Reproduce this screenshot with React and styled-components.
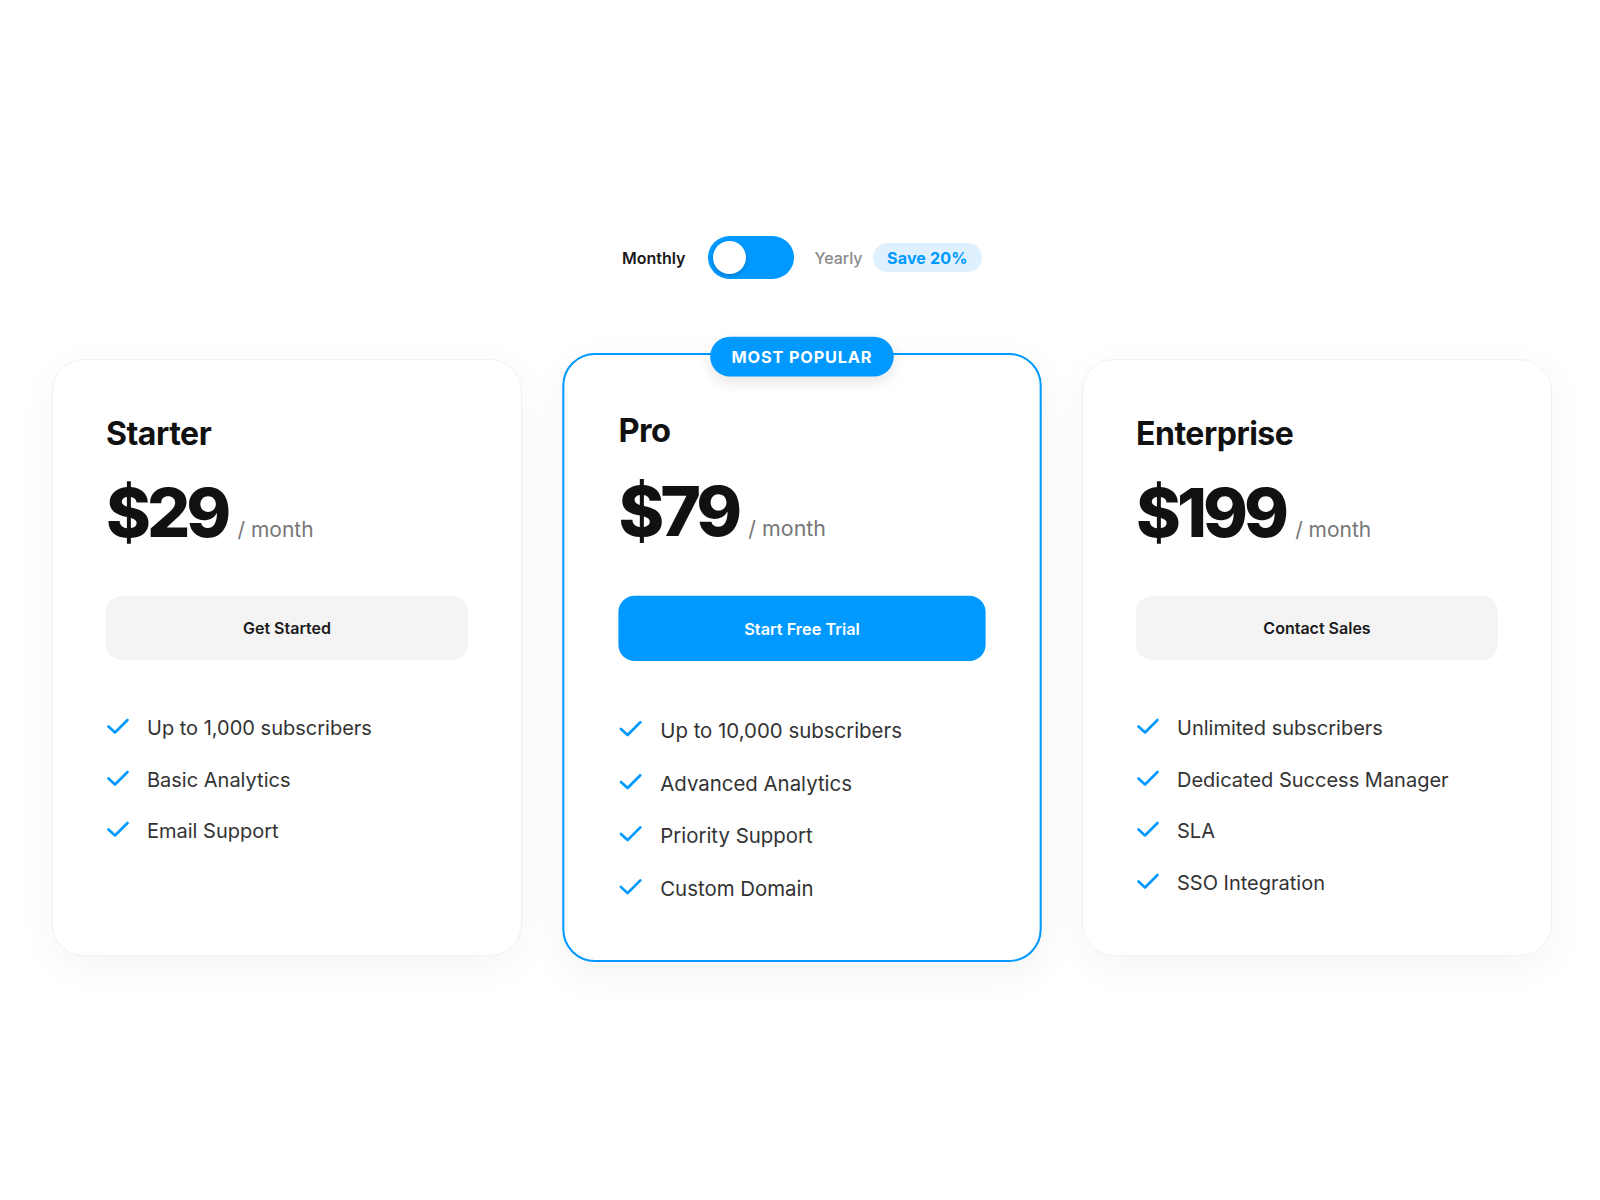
import React from 'react';
import styled, { createGlobalStyle } from 'styled-components';

const GlobalStyle = createGlobalStyle`
  body {
    margin: 0;
    background: #ffffff;
    font-family: Inter, "Noto Sans", sans-serif;
    color: #111111;
  }
`;

const plans = [
  {
    name: 'Starter',
    price: '$29',
    cta: 'Get Started',
    features: ['Up to 1,000 subscribers', 'Basic Analytics', 'Email Support'],
  },
  {
    name: 'Pro',
    price: '$79',
    cta: 'Start Free Trial',
    featured: true,
    features: [
      'Up to 10,000 subscribers',
      'Advanced Analytics',
      'Priority Support',
      'Custom Domain',
    ],
  },
  {
    name: 'Enterprise',
    price: '$199',
    cta: 'Contact Sales',
    features: [
      'Unlimited subscribers',
      'Dedicated Success Manager',
      'SLA',
      'SSO Integration',
    ],
  },
];

const CheckIcon = () => (
  <svg width="24" height="18" viewBox="0 0 24 18" fill="none">
    <path
      d="M2.5 9.5 L9 15.5 L21.5 3"
      stroke="#0099ff"
      strokeWidth="2.6"
      strokeLinecap="round"
      strokeLinejoin="round"
    />
  </svg>
);

const App = () => {
  return (
    <Page>
      <GlobalStyle />
      <BillingRow>
        <PeriodLabel active>Monthly</PeriodLabel>
        <Switch>
          <Knob />
        </Switch>
        <YearlyGroup>
          <PeriodLabel>Yearly</PeriodLabel>
          <SaveBadge>Save 20%</SaveBadge>
        </YearlyGroup>
      </BillingRow>

      <Cards>
        {plans.map((plan) => (
          <Card key={plan.name} featured={plan.featured}>
            {plan.featured && <PopularBadge>MOST POPULAR</PopularBadge>}
            <PlanName>{plan.name}</PlanName>
            <PriceRow>
              <Price>{plan.price}</Price>
              <Period>/ month</Period>
            </PriceRow>
            <CtaButton primary={plan.featured}>{plan.cta}</CtaButton>
            <FeatureList>
              {plan.features.map((f) => (
                <Feature key={f}>
                  <CheckIcon />
                  <span>{f}</span>
                </Feature>
              ))}
            </FeatureList>
          </Card>
        ))}
      </Cards>
    </Page>
  );
};

export default App;

const Page = styled.div`
  display: flex;
  flex-direction: column;
  align-items: center;
  box-sizing: border-box;
  min-height: 100vh;
  padding: 236px 0 80px 4px;
`;

const BillingRow = styled.div`
  display: flex;
  align-items: center;
  gap: 20px;
  height: 43px;
`;

const PeriodLabel = styled.span`
  font-size: 16px;
  font-weight: ${(p) => (p.active ? 600 : 500)};
  color: ${(p) => (p.active ? '#1a1a1a' : '#8a8a8a')};
  margin-right: ${(p) => (p.active ? '3px' : '0')};
`;

const Switch = styled.div`
  display: flex;
  align-items: center;
  box-sizing: border-box;
  width: 86px;
  height: 43px;
  padding: 0 5px;
  border-radius: 22px;
  background: #0099ff;
`;

const Knob = styled.div`
  width: 33px;
  height: 33px;
  border-radius: 50%;
  background: #ffffff;
  box-shadow: 0 2px 4px rgba(0, 0, 0, 0.18);
`;

const YearlyGroup = styled.div`
  display: flex;
  align-items: center;
  gap: 10px;
`;

const SaveBadge = styled.span`
  display: flex;
  align-items: center;
  height: 29px;
  padding: 0 14.5px;
  border-radius: 15px;
  background: #dff1ff;
  color: #0099ff;
  font-size: 16px;
  font-weight: 700;
  letter-spacing: 0.01em;
`;

const Cards = styled.div`
  display: grid;
  grid-template-columns: repeat(3, 470px);
  gap: 45px;
  margin-top: 80px;
`;

const Card = styled.div`
  position: relative;
  display: flex;
  flex-direction: column;
  box-sizing: border-box;
  padding: 55px 53px 55px;
  border: ${(p) => (p.featured ? '2px solid #0099ff' : '1px solid #f1f1f1')};
  border-radius: 32px;
  background: #ffffff;
  box-shadow: ${(p) =>
    p.featured
      ? '0 12px 40px rgba(0, 0, 0, 0.05)'
      : '0 10px 40px rgba(0, 0, 0, 0.045)'};
  transform: ${(p) => (p.featured ? 'scale(1.02)' : 'none')};
`;

const PopularBadge = styled.div`
  position: absolute;
  top: -18px;
  left: 50%;
  transform: translateX(-50%);
  display: flex;
  align-items: center;
  height: 39px;
  padding: 0 21px;
  border-radius: 20px;
  background: #0099ff;
  color: #ffffff;
  font-size: 16px;
  font-weight: 700;
  letter-spacing: 0.05em;
  white-space: nowrap;
  box-shadow: 0 6px 14px rgba(0, 0, 0, 0.1);
`;

const PlanName = styled.h3`
  margin: 0;
  font-size: 32px;
  line-height: 1.2;
  font-weight: 700;
  letter-spacing: -0.015em;
  color: #111111;
`;

const PriceRow = styled.div`
  display: flex;
  align-items: baseline;
  gap: 10px;
  margin-top: 25px;
`;

const Price = styled.span`
  font-size: 68px;
  line-height: 1;
  font-weight: 800;
  letter-spacing: -0.058em;
  color: #111111;
`;

const Period = styled.span`
  font-size: 21px;
  color: #777777;
`;

const CtaButton = styled.button`
  margin-top: 50px;
  height: 64px;
  border: none;
  border-radius: 16px;
  background: ${(p) => (p.primary ? '#0099ff' : '#f4f4f4')};
  color: ${(p) => (p.primary ? '#ffffff' : '#1a1a1a')};
  font-family: inherit;
  font-size: 16px;
  font-weight: 600;
  cursor: pointer;
`;

const FeatureList = styled.ul`
  display: flex;
  flex-direction: column;
  gap: 21.5px;
  margin: 53px 0 0;
  padding: 0;
  list-style: none;
`;

const Feature = styled.li`
  display: flex;
  align-items: center;
  gap: 17px;
  font-size: 20px;
  line-height: 30px;
  color: #333333;

  svg {
    flex-shrink: 0;
    margin-top: -4px;
  }
`;
